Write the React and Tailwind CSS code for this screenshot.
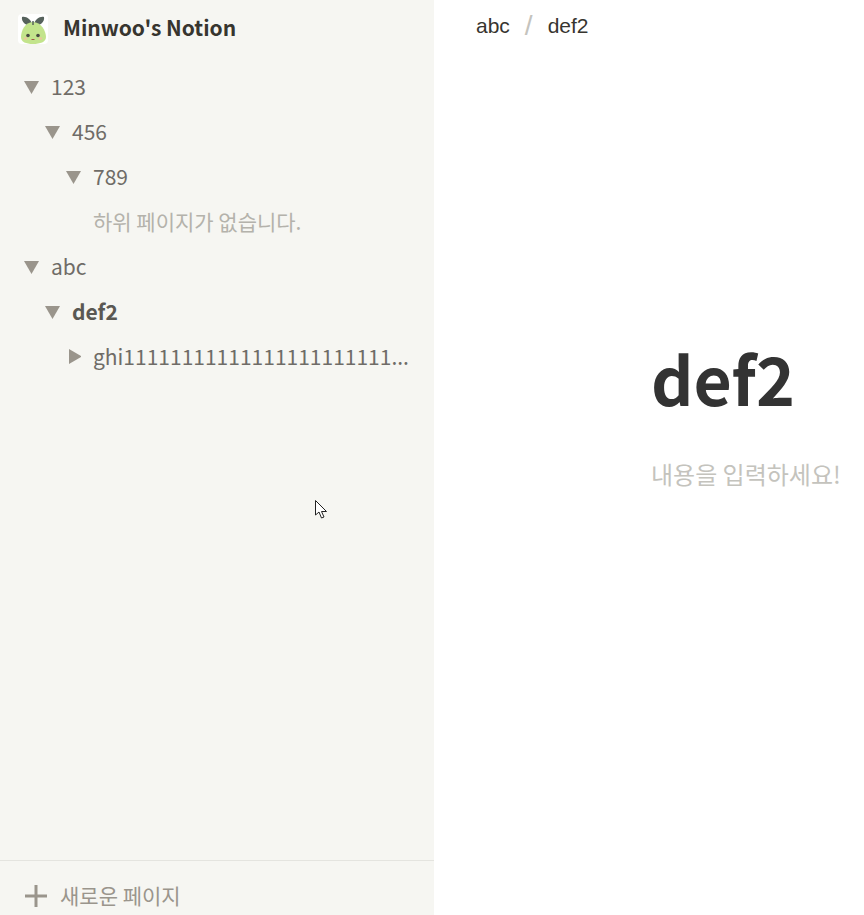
const KR = "font-['Noto_Sans_CJK_KR','Noto_Sans',sans-serif]";

const Caret = ({ open }) => (
  open
    ? <svg width="15" height="13" viewBox="0 0 15 13" className="shrink-0 mt-[2px]"><polygon points="0,0 15,0 7.5,13" fill="#9a958c" /></svg>
    : <svg width="15" height="15" viewBox="0 0 15 15" className="shrink-0"><polygon points="3,0 16,7.5 3,15" fill="#9a958c" /></svg>
);

const Row = ({ depth, open, bold, children }) => (
  <div className={`h-[45px] flex items-center gap-[12px] ${depth === 0 ? 'pl-[24px]' : depth === 1 ? 'pl-[45px]' : 'pl-[66px]'}`}>
    <Caret open={open} />
    <span className={`text-[21px] whitespace-nowrap ${bold ? 'font-bold text-[#5a5853]' : 'text-[#6f6c67]'}`}>{children}</span>
  </div>
);

const Pear = () => (
  <svg width="30" height="30" viewBox="0 0 30 30" className="shrink-0">
    <rect width="30" height="30" rx="4" fill="#ffffff" />
    <path d="M15 12 C13 5 8 2 4 3 C3 8 8 12 15 12Z" fill="#56625c" />
    <path d="M15 12 C17 5 22 2 26 3 C27 8 22 12 15 12Z" fill="#56625c" />
    <path d="M15 8 C23 8 28 17 28 23 C28 28 22 30 15 30 C8 30 3 28 3 23 C3 17 7 8 15 8Z" fill="#c3e48c" />
    <path d="M15 11 V7" stroke="#56625c" strokeWidth="1.5" />
    <circle cx="10" cy="21.5" r="1.8" fill="#4a4a44" />
    <circle cx="20" cy="21.5" r="1.8" fill="#4a4a44" />
    <ellipse cx="7.5" cy="24.5" rx="1.8" ry="1.2" fill="#e8c79a" />
    <ellipse cx="22.5" cy="24.5" rx="1.8" ry="1.2" fill="#e8c79a" />
    <path d="M13.5 25.5 H16.5" stroke="#a2544a" strokeWidth="1" />
  </svg>
);

const App = () => (
  <div className={`relative flex h-[915px] w-[864px] overflow-hidden bg-white ${KR}`}>
    {/* Sidebar */}
    <aside className="w-[434px] shrink-0 flex flex-col bg-[#f6f6f2]">
      <div className="h-[57px] pl-[18px] flex items-center gap-[15px]">
        <Pear />
        <span className="text-[21px] font-bold text-[#37352f] -mt-[1px]">Minwoo's Notion</span>
      </div>
      <nav className="flex-1 pt-[7px]">
        <Row depth={0} open>123</Row>
        <Row depth={1} open>456</Row>
        <Row depth={2} open>789</Row>
        <div className="h-[45px] flex items-center pl-[93px] text-[21px] text-[#b4b2ab]">하위 페이지가 없습니다.</div>
        <Row depth={0} open>abc</Row>
        <Row depth={1} open bold>def2</Row>
        <Row depth={2}>ghi11111111111111111111111...</Row>
      </nav>
      <div className="h-[55px] border-t border-[#e4e4df] pl-[25px] flex items-center gap-[13px] pt-[15px]">
        <svg width="22" height="22" viewBox="0 0 22 22" className="shrink-0">
          <path d="M0 11H22M11 0V22" stroke="#9a958c" strokeWidth="3" />
        </svg>
        <span className="text-[21px] text-[#9a958c]">새로운 페이지</span>
      </div>
    </aside>

    {/* Page */}
    <main className="flex-1 min-w-0">
      <div className="h-[52px] pl-[42px] flex items-center gap-[15px] font-['Liberation_Sans',sans-serif] text-[21px] text-[#37352f]">
        <span>abc</span>
        <span className="text-[#c4c3bd] text-[28px]">/</span>
        <span>def2</span>
      </div>
      <div className="pl-[217px] pt-[279px] whitespace-nowrap">
        <h1 className="text-[66px] leading-[92px] font-bold text-[#333333]">def2</h1>
        <p className="mt-[33px] text-[24px] text-[#c4c3bd]">내용을 입력하세요!</p>
      </div>
    </main>

    {/* Mouse pointer in the capture */}
    <svg width="14" height="20" viewBox="0 0 14 20" className="absolute left-[315px] top-[500px]">
      <path d="M0.5 0.5V15L4 12L6.5 18L9 17L6.5 11.5H11.5Z" fill="#ffffff" stroke="#222222" strokeWidth="1" />
    </svg>
  </div>
);

export default App;
